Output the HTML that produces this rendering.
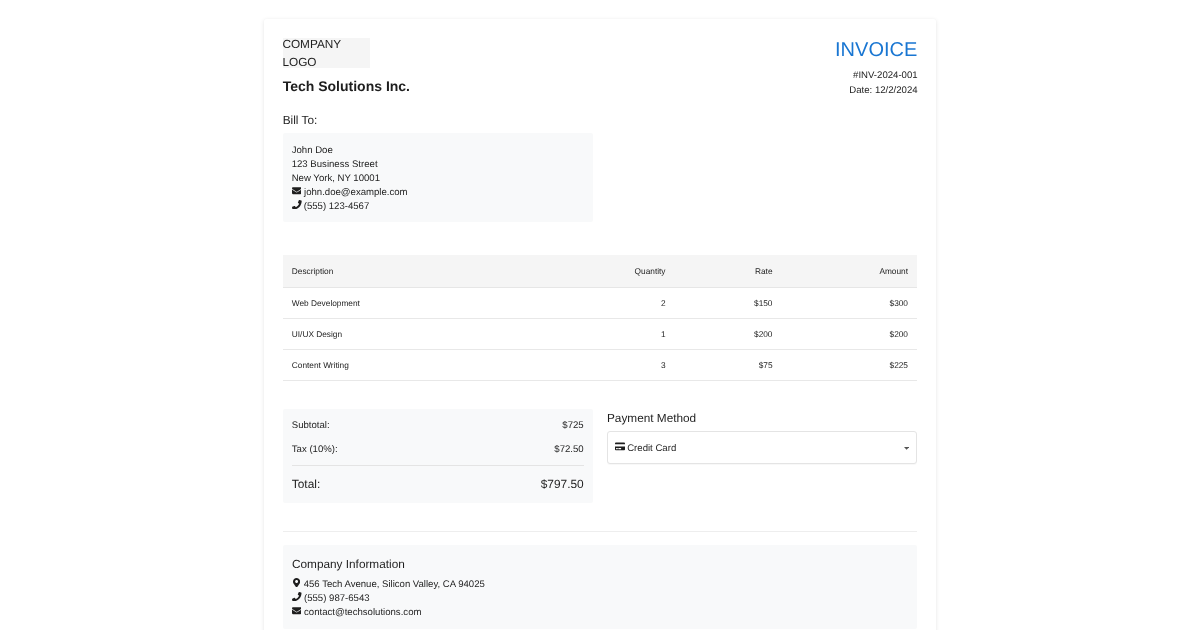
<!DOCTYPE html>
<html><head><meta charset="utf-8"><title>Invoice</title>
<style>
html,body{margin:0;padding:0;background:#fff;width:1200px;height:630px;overflow:hidden;}
#page{position:absolute;left:0;top:0;width:1200px;height:630px;overflow:hidden;background:#fff;font-family:"Liberation Sans",sans-serif;will-change:transform;text-rendering:geometricPrecision;}
.t{position:absolute;white-space:nowrap;margin:0;padding:0;}
.b{position:absolute;display:block;}
</style></head><body><div id="page">
<div class="b" style="left:264.00px;top:18.50px;width:672.00px;height:681.50px;background:#fff;border-radius:2px;box-shadow:0 1px 4px rgba(0,0,0,0.10),0 0 1px rgba(0,0,0,0.05);"></div>
<div class="b" style="left:282.90px;top:38.10px;width:87.00px;height:29.70px;background:#f5f5f5;"></div>
<div class="t" style="left:282.40px;top:36px;font-size:11.8px;line-height:16px;font-weight:400;color:#1e1e1e;">COMPANY</div>
<div class="t" style="left:282.40px;top:54px;font-size:11.8px;line-height:16px;font-weight:400;color:#1e1e1e;">LOGO</div>
<div class="t" style="left:282.70px;top:77px;font-size:14.0px;line-height:19px;font-weight:700;color:#1e1e1e;">Tech Solutions Inc.</div>
<div class="t" style="right:282.70px;top:37px;font-size:20.0px;line-height:26px;font-weight:400;color:#1976d2;">INVOICE</div>
<div class="t" style="right:282.40px;top:69px;font-size:9.6px;line-height:13px;font-weight:400;color:#1e1e1e;">#INV-2024-001</div>
<div class="t" style="right:282.40px;top:84px;font-size:9.6px;line-height:13px;font-weight:400;color:#1e1e1e;">Date: 12/2/2024</div>
<div class="t" style="left:282.70px;top:112px;font-size:11.8px;line-height:16px;font-weight:400;color:#1e1e1e;">Bill To:</div>
<div class="b" style="left:282.90px;top:133.40px;width:309.80px;height:88.20px;background:#f8f9fa;border-radius:2px;"></div>
<div class="t" style="left:291.70px;top:144px;font-size:9.6px;line-height:13px;font-weight:400;color:#1e1e1e;">John Doe</div>
<div class="t" style="left:291.70px;top:158px;font-size:9.6px;line-height:13px;font-weight:400;color:#1e1e1e;">123 Business Street</div>
<div class="t" style="left:291.70px;top:172px;font-size:9.6px;line-height:13px;font-weight:400;color:#1e1e1e;">New York, NY 10001</div>
<svg class="b" style="left:292.00px;top:185.78px" width="9.40" height="9.40" viewBox="0 0 512 512"><path fill="#1e1e1e" d="M502.3 190.8c3.9-3.1 9.7-.2 9.7 4.7V400c0 26.5-21.5 48-48 48H48c-26.5 0-48-21.5-48-48V195.600c0-5 5.700-7.800 9.700-4.700 22.400 17.400 52.100 39.500 154.100 113.600 21.100 15.400 56.700 47.800 92.200 47.600 35.700.3 72-32.800 92.300-47.600 102-74.100 131.600-96.300 154-113.700zM256 320c23.200.4 56.600-29.200 73.400-41.400 132.700-96.300 142.800-104.700 173.400-128.700 5.800-4.500 9.200-11.500 9.200-18.900v-19c0-26.500-21.500-48-48-48H48C21.500 64 0 85.500 0 112v19c0 7.400 3.400 14.300 9.200 18.900 30.600 23.900 40.700 32.400 173.400 128.700 16.800 12.200 50.200 41.800 73.400 41.400z"/></svg>
<div class="t" style="left:304.00px;top:186px;font-size:9.6px;line-height:13px;font-weight:400;color:#1e1e1e;">john.doe@example.com</div>
<svg class="b" style="left:292.00px;top:199.56px" width="9.70" height="9.70" viewBox="0 0 512 512"><path fill="#1e1e1e" d="M493.4 24.6l-104-24c-11.300-2.600-22.900 3.300-27.500 13.900l-48 112c-4.200 9.800-1.400 21.300 6.900 28l60.600 49.600c-36 76.700-98.900 140.500-177.200 177.200l-49.600-60.600c-6.800-8.300-18.200-11.100-28-6.900l-112 48C3.900 366.500-2 378.100.6 389.400l24 104C27.100 504.200 36.700 512 48 512c256.100 0 464-207.500 464-464 0-11.200-7.700-20.900-18.600-23.400z"/></svg>
<div class="t" style="left:303.70px;top:200px;font-size:9.6px;line-height:13px;font-weight:400;color:#1e1e1e;">(555) 123-4567</div>
<div class="b" style="left:282.90px;top:255.10px;width:634.10px;height:32.30px;background:#f5f5f5;"></div>
<div class="b" style="left:282.90px;top:287.40px;width:634.10px;height:1.00px;background:#e6e6e6;"></div>
<div class="t" style="left:291.80px;top:266px;font-size:8.3px;line-height:11px;font-weight:400;color:#1e1e1e;">Description</div>
<div class="t" style="right:534.50px;top:266px;font-size:8.3px;line-height:11px;font-weight:400;color:#1e1e1e;">Quantity</div>
<div class="t" style="right:427.50px;top:266px;font-size:8.3px;line-height:11px;font-weight:400;color:#1e1e1e;">Rate</div>
<div class="t" style="right:292.00px;top:266px;font-size:8.3px;line-height:11px;font-weight:400;color:#1e1e1e;">Amount</div>
<div class="t" style="left:291.80px;top:298px;font-size:8.3px;line-height:11px;font-weight:400;color:#1e1e1e;">Web Development</div>
<div class="t" style="right:534.50px;top:298px;font-size:8.3px;line-height:11px;font-weight:400;color:#1e1e1e;">2</div>
<div class="t" style="right:427.50px;top:298px;font-size:8.3px;line-height:11px;font-weight:400;color:#1e1e1e;">$150</div>
<div class="t" style="right:292.00px;top:298px;font-size:8.3px;line-height:11px;font-weight:400;color:#1e1e1e;">$300</div>
<div class="b" style="left:282.90px;top:318.00px;width:634.10px;height:1.00px;background:#e8e8e8;"></div>
<div class="t" style="left:291.80px;top:329px;font-size:8.3px;line-height:11px;font-weight:400;color:#1e1e1e;">UI/UX Design</div>
<div class="t" style="right:534.50px;top:329px;font-size:8.3px;line-height:11px;font-weight:400;color:#1e1e1e;">1</div>
<div class="t" style="right:427.50px;top:329px;font-size:8.3px;line-height:11px;font-weight:400;color:#1e1e1e;">$200</div>
<div class="t" style="right:292.00px;top:329px;font-size:8.3px;line-height:11px;font-weight:400;color:#1e1e1e;">$200</div>
<div class="b" style="left:282.90px;top:349.00px;width:634.10px;height:1.00px;background:#e8e8e8;"></div>
<div class="t" style="left:291.80px;top:360px;font-size:8.3px;line-height:11px;font-weight:400;color:#1e1e1e;">Content Writing</div>
<div class="t" style="right:534.50px;top:360px;font-size:8.3px;line-height:11px;font-weight:400;color:#1e1e1e;">3</div>
<div class="t" style="right:427.50px;top:360px;font-size:8.3px;line-height:11px;font-weight:400;color:#1e1e1e;">$75</div>
<div class="t" style="right:292.00px;top:360px;font-size:8.3px;line-height:11px;font-weight:400;color:#1e1e1e;">$225</div>
<div class="b" style="left:282.90px;top:380.00px;width:634.10px;height:1.00px;background:#e8e8e8;"></div>
<div class="b" style="left:282.90px;top:409.10px;width:309.80px;height:93.60px;background:#f8f9fa;border-radius:2px;"></div>
<div class="t" style="left:291.80px;top:419px;font-size:9.6px;line-height:13px;font-weight:400;color:#1e1e1e;">Subtotal:</div>
<div class="t" style="right:616.30px;top:419px;font-size:9.6px;line-height:13px;font-weight:400;color:#1e1e1e;">$725</div>
<div class="t" style="left:291.80px;top:443px;font-size:9.6px;line-height:13px;font-weight:400;color:#1e1e1e;">Tax (10%):</div>
<div class="t" style="right:616.30px;top:443px;font-size:9.6px;line-height:13px;font-weight:400;color:#1e1e1e;">$72.50</div>
<div class="b" style="left:292.00px;top:464.80px;width:291.60px;height:1.00px;background:#e4e4e4;"></div>
<div class="t" style="left:291.80px;top:476px;font-size:11.9px;line-height:16px;font-weight:400;color:#1e1e1e;">Total:</div>
<div class="t" style="right:616.30px;top:476px;font-size:11.9px;line-height:16px;font-weight:400;color:#1e1e1e;">$797.50</div>
<div class="t" style="left:607.00px;top:410px;font-size:11.8px;line-height:16px;font-weight:400;color:#1e1e1e;">Payment Method</div>
<div class="b" style="left:607.00px;top:431.00px;width:310.00px;height:33.00px;box-sizing:border-box;border:1px solid #e4e4e4;border-radius:3px;background:#fff;box-shadow:0 1px 1px rgba(0,0,0,0.03);"></div>
<svg class="b" style="left:614.80px;top:442.06px" width="10.01" height="8.90" viewBox="0 0 576 512"><path fill="#1e1e1e" d="M0 432c0 26.500 21.500 48 48 48h480c26.500 0 48-21.500 48-48V256H0v176zm192-68c0-6.600 5.400-12 12-12h136c6.600 0 12 5.400 12 12v40c0 6.600-5.400 12-12 12H204c-6.600 0-12-5.400-12-12v-40zm-128 0c0-6.600 5.400-12 12-12h72c6.600 0 12 5.400 12 12v40c0 6.600-5.400 12-12 12H76c-6.600 0-12-5.400-12-12v-40zM576 80v48H0V80c0-26.500 21.500-48 48-48h480c26.500 0 48 21.500 48 48z"/></svg>
<div class="t" style="left:627.20px;top:442px;font-size:9.6px;line-height:13px;font-weight:400;color:#1e1e1e;">Credit Card</div>
<svg class="b" style="left:903.8px;top:446.8px" width="5.2" height="2.8" viewBox="0 0 10 5"><path fill="#555" d="M0 0h10L5 5z"/></svg>
<div class="b" style="left:282.90px;top:531.00px;width:634.10px;height:1.00px;background:#eeeeee;"></div>
<div class="b" style="left:282.90px;top:545.30px;width:634.10px;height:83.30px;background:#f8f9fa;border-radius:2px;"></div>
<div class="t" style="left:292.00px;top:556px;font-size:11.8px;line-height:16px;font-weight:400;color:#1e1e1e;">Company Information</div>
<svg class="b" style="left:293.10px;top:577.85px" width="7.20" height="9.60" viewBox="0 0 384 512"><path fill="#1e1e1e" d="M172.268 501.670C26.970 291.031 0 269.413 0 192 0 85.961 85.961 0 192 0s192 85.961 192 192c0 77.413-26.970 99.031-172.268 309.670-9.535 13.774-29.930 13.773-39.464 0zM192 272c44.183 0 80-35.817 80-80s-35.817-80-80-80-80 35.817-80 80 35.817 80 80 80z"/></svg>
<div class="t" style="left:303.70px;top:578px;font-size:9.57px;line-height:13px;font-weight:400;color:#1e1e1e;">456 Tech Avenue, Silicon Valley, CA 94025</div>
<svg class="b" style="left:292.00px;top:591.99px" width="9.50" height="9.50" viewBox="0 0 512 512"><path fill="#1e1e1e" d="M493.4 24.6l-104-24c-11.300-2.600-22.900 3.300-27.500 13.900l-48 112c-4.200 9.800-1.400 21.300 6.900 28l60.600 49.600c-36 76.700-98.900 140.500-177.200 177.200l-49.600-60.600c-6.800-8.300-18.200-11.100-28-6.900l-112 48C3.900 366.500-2 378.100.6 389.400l24 104C27.100 504.200 36.700 512 48 512c256.100 0 464-207.500 464-464 0-11.200-7.700-20.900-18.600-23.400z"/></svg>
<div class="t" style="left:304.00px;top:592px;font-size:9.6px;line-height:13px;font-weight:400;color:#1e1e1e;">(555) 987-6543</div>
<svg class="b" style="left:292.00px;top:605.77px" width="9.40" height="9.40" viewBox="0 0 512 512"><path fill="#1e1e1e" d="M502.3 190.8c3.9-3.1 9.7-.2 9.7 4.7V400c0 26.5-21.5 48-48 48H48c-26.5 0-48-21.5-48-48V195.600c0-5 5.700-7.800 9.700-4.700 22.400 17.400 52.100 39.500 154.100 113.600 21.100 15.400 56.700 47.800 92.200 47.600 35.700.3 72-32.800 92.300-47.600 102-74.100 131.600-96.300 154-113.700zM256 320c23.200.4 56.600-29.200 73.400-41.400 132.700-96.300 142.800-104.700 173.400-128.700 5.800-4.500 9.200-11.500 9.200-18.900v-19c0-26.500-21.500-48-48-48H48C21.500 64 0 85.500 0 112v19c0 7.400 3.400 14.300 9.200 18.900 30.600 23.900 40.700 32.400 173.400 128.700 16.800 12.200 50.200 41.800 73.400 41.400z"/></svg>
<div class="t" style="left:304.00px;top:606px;font-size:9.6px;line-height:13px;font-weight:400;color:#1e1e1e;">contact@techsolutions.com</div>
</div></body></html>
